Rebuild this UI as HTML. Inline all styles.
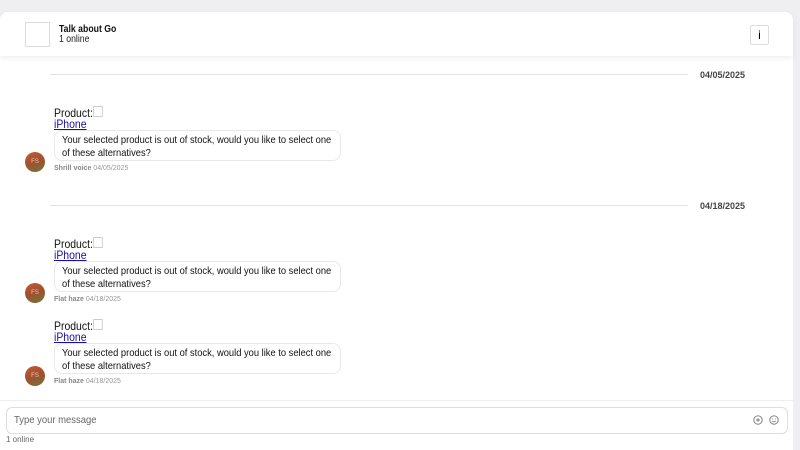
<!DOCTYPE html>
<html><head><style>
body{margin:0;width:800px;height:450px;background:#efeff1;font-family:"Liberation Sans",sans-serif;position:relative;overflow:hidden}
.card{position:absolute;left:0;top:12px;width:793px;height:438px;background:#fff;border-radius:8px 8px 0 0}
.hdr{position:absolute;left:0;top:12px;width:793px;height:44px;background:#fff;box-shadow:0 2px 6px rgba(0,0,0,.07);border-radius:8px 8px 0 0}
.logo{position:absolute;left:25px;top:22px;width:23px;height:23px;border:1px solid #ddd}
.sx{transform:scaleX(.87);transform-origin:0 0;white-space:nowrap}
.t1{position:absolute;left:59px;top:24px;font-size:10px;font-weight:bold;color:#111}
.t2{position:absolute;left:59px;top:34px;font-size:10px;color:#222}
.info{position:absolute;left:750px;top:25px;width:17px;height:18px;border:1px solid #ddd;border-radius:2px;font-size:12px;text-align:center;line-height:18px}
.line{position:absolute;left:50px;width:638px;border-top:1px solid #e3e3e3}
.date{position:absolute;left:700px;font-size:9px;font-weight:bold;color:#444}
.prod{position:absolute;left:54px;font-size:12px;color:#111;line-height:11px}
.prod a{color:#1a0dab;text-decoration:underline}
.bub{position:absolute;left:54px;width:287px;height:31px;box-sizing:border-box;border:1px solid #e8e8e8;border-radius:8px;padding:3px 7px 0;font-size:10.5px;line-height:12.5px;color:#111}
.bub div{transform:scaleX(.89);transform-origin:0 0;white-space:nowrap}
.av{position:absolute;left:25px;width:20px;height:20px;border-radius:50%;background:linear-gradient(160deg,#c25a3a 0%,#a0502e 50%,#6c7a3a 100%);color:#f3c8b0;font-size:6px;text-align:center;line-height:20px}
.meta{position:absolute;left:54px;font-size:7px;color:#999}
.meta b{color:#888}
.inp{position:absolute;left:6px;top:407px;width:780px;height:25px;border:1px solid #dedede;border-radius:6px}
.ph{position:absolute;left:14px;top:414px;font-size:10.5px;color:#666}
.foot{position:absolute;left:6px;top:435px;font-size:8px;color:#666}
.sep{position:absolute;left:0;top:400px;width:793px;border-top:1px solid #eee}
</style></head><body>
<div class="card"></div>
<div class="hdr"></div>
<div class="logo"></div>
<div class="t1 sx">Talk about Go</div>
<div class="t2 sx">1 online</div>
<div class="info">i</div>

<div class="line" style="top:74px"></div><div class="date" style="top:70px">04/05/2025</div>
<div class="prod sx" style="top:106px">Product:<span style="display:inline-block;width:9px;height:9px;border:1px solid #ccc"></span><br><a>iPhone</a></div>
<div class="bub" style="top:130px"><div>Your selected product is out of stock, would you like to select one<br>of these alternatives?</div></div>
<div class="av" style="top:152px">FS</div>
<div class="meta" style="top:165px"><b>Shrill voice</b> 04/05/2025</div>

<div class="line" style="top:205px"></div><div class="date" style="top:201px">04/18/2025</div>
<div class="prod sx" style="top:237px">Product:<span style="display:inline-block;width:9px;height:9px;border:1px solid #ccc"></span><br><a>iPhone</a></div>
<div class="bub" style="top:261px"><div>Your selected product is out of stock, would you like to select one<br>of these alternatives?</div></div>
<div class="av" style="top:283px">FS</div>
<div class="meta" style="top:296px"><b>Flat haze</b> 04/18/2025</div>

<div class="prod sx" style="top:319px">Product:<span style="display:inline-block;width:9px;height:9px;border:1px solid #ccc"></span><br><a>iPhone</a></div>
<div class="bub" style="top:343px"><div>Your selected product is out of stock, would you like to select one<br>of these alternatives?</div></div>
<div class="av" style="top:366px">FS</div>
<div class="meta" style="top:378px"><b>Flat haze</b> 04/18/2025</div>

<div class="sep"></div>
<div class="inp"></div>
<div class="ph sx" style="transform:scaleX(.9)">Type your message</div>
<svg style="position:absolute;left:753px;top:415px" width="10" height="10" viewBox="0 0 10 10"><circle cx="5" cy="5" r="4.2" fill="none" stroke="#777" stroke-width=".9"/><path d="M5 3v4M3 5h4" stroke="#777" stroke-width=".9"/></svg>
<svg style="position:absolute;left:769px;top:415px" width="10" height="10" viewBox="0 0 10 10"><circle cx="5" cy="5" r="4.2" fill="none" stroke="#777" stroke-width=".9"/><circle cx="3.6" cy="4" r=".5" fill="#777"/><circle cx="6.4" cy="4" r=".5" fill="#777"/><path d="M3.2 6q1.8 1.6 3.6 0" fill="none" stroke="#777" stroke-width=".8"/></svg>
<div class="foot">1 online</div>
</body></html>
